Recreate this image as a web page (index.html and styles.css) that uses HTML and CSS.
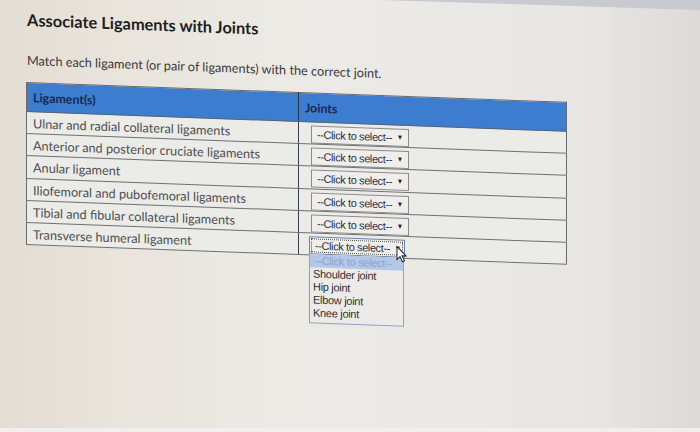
FILE: index.html
```html
<!DOCTYPE html>
<html lang="en">
<head>
<meta charset="utf-8">
<title>Associate Ligaments with Joints</title>
<link rel="stylesheet" href="styles.css">
</head>
<body>
<div class="top-band"></div>
<main class="page">
  <h1 class="title">Associate Ligaments with Joints</h1>
  <p class="intro">Match each ligament (or pair of ligaments) with the correct joint.</p>
  <table class="match">
    <thead>
      <tr><th class="col-lig">Ligament(s)</th><th class="col-joint">Joints</th></tr>
    </thead>
    <tbody>
      <tr><td>Ulnar and radial collateral ligaments</td><td><span class="sel"><span class="sel-text">--Click to select--</span><i class="arrow"></i></span></td></tr>
      <tr><td>Anterior and posterior cruciate ligaments</td><td><span class="sel"><span class="sel-text">--Click to select--</span><i class="arrow"></i></span></td></tr>
      <tr><td>Anular ligament</td><td><span class="sel"><span class="sel-text">--Click to select--</span><i class="arrow"></i></span></td></tr>
      <tr><td>Iliofemoral and pubofemoral ligaments</td><td><span class="sel"><span class="sel-text">--Click to select--</span><i class="arrow"></i></span></td></tr>
      <tr><td>Tibial and fibular collateral ligaments</td><td><span class="sel"><span class="sel-text">--Click to select--</span><i class="arrow"></i></span></td></tr>
      <tr><td>Transverse humeral ligament</td><td>
        <span class="sel-wrap">
          <span class="sel sel-open"><span class="sel-text">--Click to select--</span><i class="arrow"></i></span>
          <ul class="options">
            <li class="opt-active">--Click to select--</li>
            <li>Shoulder joint</li>
            <li>Hip joint</li>
            <li>Elbow joint</li>
            <li>Knee joint</li>
          </ul>
          <svg class="cursor" width="11" height="17" viewBox="0 0 11 17"><path d="M1 1 L1 14 L4 11 L6.5 16 L8.5 15 L6 10 L10 10 Z" fill="#fff" stroke="#222" stroke-width="1"/></svg>
        </span>
      </td></tr>
    </tbody>
  </table>
</main>
</body>
</html>
```

FILE: styles.css
```css
html, body {
  margin: 0;
  padding: 0;
}
body {
  width: 700px;
  height: 432px;
  overflow: hidden;
  position: relative;
  background:
    linear-gradient(180deg, rgba(255,255,255,0) 0%, rgba(255,255,255,0) 99%, #efefed 99%),
    linear-gradient(90deg, #e3ddd4 0%, #e9e4dc 18%, #ebeae5 40%, #eae9e5 60%, #e7e6e3 85%, #ddd9d6 100%);
  font-family: Lato, "Open Sans", sans-serif;
}
.top-band {
  position: absolute;
  left: 0;
  top: 0;
  width: 700px;
  height: 12px;
  background: #c9c9d2;
  clip-path: polygon(380px 0, 700px 0, 700px 10px);
}
.page {
  padding: 8px 0 0 27px;
  transform: skewY(2.1deg);
  transform-origin: 0 0;
}
.title {
  margin: 0;
  font-size: 16.4px;
  line-height: 22px;
  font-weight: 700;
  color: #1e1e22;
}
.intro {
  margin: 20px 0 0 0;
  font-size: 12.7px;
  line-height: 18px;
  color: #3a3a3c;
}
.match {
  margin: 13px 0 0 -1px;
  width: 541px;
  border-collapse: collapse;
  border: 1px solid #6a6a6e;
}
.match th {
  background: #3d7dd0;
  color: #1a2848;
  font-size: 12.4px;
  font-weight: 700;
  text-align: left;
  height: 28px;
  padding: 0 0 0 6px;
  border-bottom: 1px solid #5a6478;
}
.match th.col-lig {
  width: 265px;
  vertical-align: top;
  padding-top: 7px;
  height: 21px;
  line-height: 15px;
}
.match th.col-joint {
  border-left: 1px solid #2c3650;
}
.match td {
  box-sizing: border-box;
  height: 22.2px;
  padding: 2px 0 0 6px;
  border-bottom: 1px solid #707074;
  font-size: 12.7px;
  color: #4f4f52;
  vertical-align: top;
  line-height: 18px;
  background: #ebebe8;
}
.match td + td {
  border-left: 1px solid #3a3e4a;
  padding: 3px 0 0 12px;
  line-height: 16px;
}
.sel {
  display: flex;
  align-items: center;
  box-sizing: border-box;
  width: 98px;
  height: 18px;
  padding: 0 0 0 5px;
  border: 1px solid #8b8b8f;
  background: #efeeeb;
  font-family: "Liberation Sans", Arial, sans-serif;
  font-size: 11px;
  letter-spacing: -0.4px;
  color: #2a2f45;
  line-height: 16px;
  white-space: nowrap;
}
.sel-text {
  flex: none;
}
.arrow {
  flex: none;
  margin-left: 6px;
  width: 0;
  height: 0;
  border-left: 2.5px solid transparent;
  border-right: 2.5px solid transparent;
  border-top: 4px solid #222;
}
.sel-wrap {
  position: relative;
  display: block;
  width: 96px;
  margin-left: -2px;
}
.sel-open {
  width: 96px;
  border: 1px solid #6d82b2;
  outline: 1px dotted #555;
  outline-offset: -3px;
}
.options {
  position: absolute;
  left: 0;
  top: 18px;
  width: 95px;
  margin: 0;
  padding: 0 0 3px 0;
  list-style: none;
  box-sizing: border-box;
  border: 1px solid #8fa2c6;
  border-top: none;
  background: #ecebe8;
  font-family: "Liberation Sans", Arial, sans-serif;
  font-size: 11px;
  letter-spacing: -0.3px;
  line-height: 13px;
  color: #2e2e33;
  white-space: nowrap;
}
.options li {
  padding-left: 3px;
}
.options li.opt-active {
  background: #b3c7e6;
  color: #8ea4cc;
  padding-left: 5px;
}
.cursor {
  position: absolute;
  left: 87px;
  top: 6px;
}
```
